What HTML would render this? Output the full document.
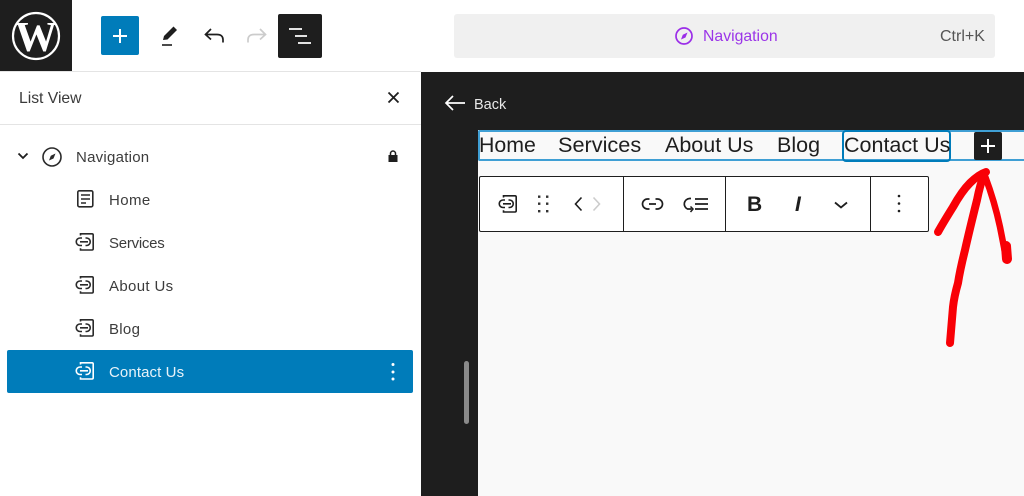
<!DOCTYPE html>
<html><head><meta charset="utf-8"><style>
html,body{margin:0;padding:0;background:#fff}
body{width:1024px;height:496px;overflow:hidden;position:relative;font-family:"Liberation Sans",sans-serif}
#w{position:absolute;left:0;top:0;width:1024px;height:496px;overflow:hidden;background:#fff;filter:blur(.35px)}
.a{position:absolute}
.t{position:absolute;white-space:nowrap;line-height:20px;color:#3c3c3c;font-size:15px}
.n{position:absolute;white-space:nowrap;line-height:28px;top:131px;color:#1e1e1e;font-size:21.5px}
svg{position:absolute;overflow:visible;fill:none}
</style></head><body><div id="w">
<div class="a" style="left:0;top:71px;width:421px;height:1px;background:#e4e4e4"></div>
<div class="a" style="left:0;top:124px;width:421px;height:1px;background:#e4e4e4"></div>
<div class="a" style="left:0;top:0;width:72px;height:71px;background:#1e1e1e"></div>
<svg style="left:0;top:0" width="72" height="72"><circle cx="36" cy="36" r="23" stroke="#fff" stroke-width="2.2"/></svg>
<div class="a" style="left:12px;top:15px;width:48px;text-align:center;color:#fff;font:700 42px/46px 'Liberation Serif',serif">W</div>
<div class="a" style="left:101px;top:16px;width:38px;height:39px;background:#007cba;border-radius:2px"></div>
<svg style="left:101px;top:16px" width="38" height="39"><path d="M19 13v14M12 20h14" stroke="#fff" stroke-width="2"/></svg>
<svg style="left:160px;top:24px" width="20" height="24"><path d="M3 16l1-4L13.500 2.500l3.500 3.500L7.500 15.500z" fill="#1e1e1e"/><path d="M2 21h10" stroke="#1e1e1e" stroke-width="1.600"/></svg>
<svg style="left:203px;top:27px" width="22" height="18"><path d="M8 2L2.500 7.500 8 12.500M3 7.500h11c4 0 6 2 6 5v3" stroke="#1e1e1e" stroke-width="1.700"/></svg>
<svg style="left:246px;top:27px" width="22" height="18"><path d="M14 2l5.500 5.500L14 12.500M19 7.500H8c-4 0-6 2-6 5v3" stroke="#ccc" stroke-width="1.700"/></svg>
<div class="a" style="left:278px;top:14px;width:44px;height:44px;background:#1e1e1e;border-radius:2px"></div>
<svg style="left:278px;top:14px" width="44" height="44"><path d="M11 15h13M17 22h12M20 29h13" stroke="#fff" stroke-width="1.800"/></svg>

<div class="a" style="left:454px;top:14px;width:541px;height:44px;background:#f0f0f0;border-radius:3px"></div>
<svg style="left:673px;top:25px" width="22" height="22"><circle cx="11" cy="11" r="8" stroke="#9b2ee8" stroke-width="1.700"/><path d="M14.500 7.500L12.500 12.500 8 14.500 9.800 9.700z" fill="#9b2ee8"/></svg>
<div class="t" style="left:703px;top:27px;color:#9b35e8;font-size:15.800px">Navigation</div>
<div class="t" style="left:940px;top:27px;color:#555;font-size:16px">Ctrl+K</div>

<div class="t" style="left:19px;top:89px;font-size:15.700px;color:#3a3a3a">List View</div>
<svg style="left:385px;top:89px" width="18" height="18"><path d="M3.500 3.500l10 10M13.500 3.500l-10 10" stroke="#1e1e1e" stroke-width="1.800"/></svg>

<svg style="left:17px;top:151px" width="12" height="10"><path d="M1.500 2.500L6 7l4.500-4.500" stroke="#1e1e1e" stroke-width="1.800"/></svg>
<svg style="left:41px;top:146px" width="22" height="22"><circle cx="11" cy="11" r="9" stroke="#2a2a2a" stroke-width="1.600"/><path d="M14.500 7.500L12.500 12.500 8 14.500 9.800 9.700z" fill="#2a2a2a"/></svg>
<div class="t" style="left:76px;top:148px;letter-spacing:.25px">Navigation</div>
<svg style="left:387px;top:149px" width="12" height="14"><path d="M3.500 6V4.500a2.500 2.500 0 0 1 5 0V6" stroke="#1e1e1e" stroke-width="1.500"/><rect x="1.500" y="6" width="9" height="7" fill="#1e1e1e"/></svg>

<svg style="left:76px;top:189px" width="20" height="20"><rect x="1.800" y="1.800" width="15" height="16" rx="1.500" stroke="#2a2a2a" stroke-width="1.600"/><path d="M5 6h9M5 10h9M5 14h5" stroke="#2a2a2a" stroke-width="1.500"/></svg>
<div class="t" style="left:109px;top:191px;letter-spacing:.4px">Home</div>

<svg style="left:74px;top:232px;color:#2a2a2a" width="22" height="20"><use href="#lk"/></svg>
<div class="t" style="left:109px;top:234px;letter-spacing:-.25px">Services</div>
<svg style="left:74px;top:275px;color:#2a2a2a" width="22" height="20"><use href="#lk"/></svg>
<div class="t" style="left:109px;top:277px;letter-spacing:.35px">About Us</div>
<svg style="left:74px;top:318px;color:#2a2a2a" width="22" height="20"><use href="#lk"/></svg>
<div class="t" style="left:109px;top:320px;letter-spacing:.3px">Blog</div>

<div class="a" style="left:7px;top:350px;width:406px;height:43px;background:#007cba;border-radius:2px"></div>
<svg style="left:74px;top:361px;color:#fff" width="22" height="20"><use href="#lk"/></svg>
<div class="t" style="left:109px;top:363px;color:#e8f3f9;letter-spacing:.1px">Contact Us</div>
<svg style="left:385px;top:361px" width="16" height="22"><circle cx="8" cy="3.500" r="1.500" fill="#fff"/><circle cx="8" cy="11" r="1.500" fill="#fff"/><circle cx="8" cy="18" r="1.500" fill="#fff"/></svg>

<svg width="0" height="0" style="left:0;top:0"><defs><g id="lk" stroke="currentColor" stroke-width="1.600"><path d="M6.500 3.500V1.800h11.500c.8 0 1.200.5 1.200 1.200v13.800c0 .7-.4 1.200-1.200 1.200H6.500v-1.700"/><path d="M8 6H6a3.500 3.500 0 0 0 0 7.500h2M11.500 6h1a3.500 3.500 0 0 1 0 7.500h-1M6 9.800h8"/></g></defs></svg>

<div class="a" style="left:421px;top:72px;width:603px;height:424px;background:#1e1e1e"></div>
<div class="a" style="left:478px;top:130px;width:546px;height:366px;background:#f9f9f9"></div>
<div class="a" style="left:464px;top:361px;width:5px;height:63px;background:#8a8a8a;border-radius:3px"></div>
<svg style="left:444px;top:94px" width="22" height="18"><path d="M9 2L2 9l7 7M2.500 9H21" stroke="#fff" stroke-width="1.700"/></svg>
<div class="t" style="left:474px;top:95px;color:#e8e8e8;font-size:14.500px">Back</div>

<div class="a" style="left:478px;top:130px;width:546px;height:31px;box-sizing:border-box;border:2px solid #3f9fd4;border-right:0;background:#f9f9f9;border-radius:2px 0 0 2px"></div>
<div class="n" style="left:479px;font-size:21.300px">Home</div>
<div class="n" style="left:558px;font-size:21.700px">Services</div>
<div class="n" style="left:665px">About Us</div>
<div class="n" style="left:777px">Blog</div>
<div class="a" style="left:842px;top:130px;width:105px;height:28px;border:2px solid #007cba;border-radius:4px"></div>
<div class="n" style="left:844px">Contact Us</div>
<div class="a" style="left:974px;top:132px;width:28px;height:28px;background:#1e1e1e;border-radius:2px"></div>
<svg style="left:974px;top:132px" width="28" height="28"><path d="M14 7v14M7 14h14" stroke="#fff" stroke-width="2"/></svg>

<div class="a" style="left:479px;top:176px;width:450px;height:56px;border:1px solid #1e1e1e;border-radius:2px;background:#fff;box-sizing:border-box"></div>
<div class="a" style="left:623px;top:176px;width:1px;height:55px;background:#1e1e1e"></div>
<div class="a" style="left:725px;top:176px;width:1px;height:55px;background:#1e1e1e"></div>
<div class="a" style="left:870px;top:176px;width:1px;height:55px;background:#1e1e1e"></div>
<svg style="left:497px;top:194px;color:#1e1e1e" width="22" height="20"><use href="#lk"/></svg>
<svg style="left:536px;top:194px" width="16" height="20"><g fill="#333"><rect x="2" y="1.500" width="2.400" height="2.400"/><rect x="10" y="1.500" width="2.400" height="2.400"/><rect x="2" y="8.500" width="2.400" height="2.400"/><rect x="10" y="8.500" width="2.400" height="2.400"/><rect x="2" y="16" width="2.400" height="2.400"/><rect x="10" y="16" width="2.400" height="2.400"/></g></svg>
<svg style="left:572px;top:195px" width="32" height="18"><path d="M9.500 2.500L3.500 9l6 6.500" stroke="#1e1e1e" stroke-width="1.600"/><path d="M21.500 2.500l6 6.500-6 6.500" stroke="#ccc" stroke-width="1.600"/></svg>
<svg style="left:641px;top:196px" width="26" height="16"><path d="M8.500 3H6.500a5 5 0 0 0 0 10h2M14.500 3h2a5 5 0 0 1 0 10h-2M8 8h7" stroke="#1e1e1e" stroke-width="1.700"/></svg>
<svg style="left:683px;top:196px" width="28" height="18"><path d="M8 2.500H6.500a5.500 5.500 0 0 0-2 10.500h4" stroke="#1e1e1e" stroke-width="1.700"/><path d="M7.500 10.500L10 13l-2.500 3" stroke="#1e1e1e" stroke-width="1.500"/><path d="M12 3h13M12 8h13M12 13h13" stroke="#1e1e1e" stroke-width="1.700"/></svg>
<div class="a" style="left:747px;top:191px;font:700 21px/28px 'Liberation Sans',sans-serif;color:#1e1e1e">B</div>
<div class="a" style="left:795px;top:191px;font:italic 700 21px/28px 'Liberation Sans',sans-serif;color:#1e1e1e">I</div>
<svg style="left:833px;top:199px" width="16" height="12"><path d="M2 3.500L8 8.500l6-5" stroke="#1e1e1e" stroke-width="1.800"/></svg>
<svg style="left:891px;top:193px" width="16" height="22"><circle cx="8" cy="3" r="1.300" fill="#1e1e1e"/><circle cx="8" cy="10.500" r="1.300" fill="#1e1e1e"/><circle cx="8" cy="18" r="1.300" fill="#1e1e1e"/></svg>

<svg style="left:0;top:0" width="1024" height="496"><g stroke="#f90006" stroke-linecap="round" stroke-linejoin="round" fill="none"><path d="M950 343C951 330 952 318 953 307 954 298 956 290 958 283 960 270 963 258 965 250 969 232 973 216 977 200 979 190 981 182 984 175" stroke-width="8"/><path d="M938 232C943 223 948 215 953 207 958 198 964 189 970 183 975 178 980 174 986 172" stroke-width="8"/><path d="M985 176C991 192 996 208 1000 227 1002 237 1004 247 1006 258" stroke-width="6.500"/><path d="M1006 246L1007 259" stroke-width="10"/></g></svg>
</div></body></html>
